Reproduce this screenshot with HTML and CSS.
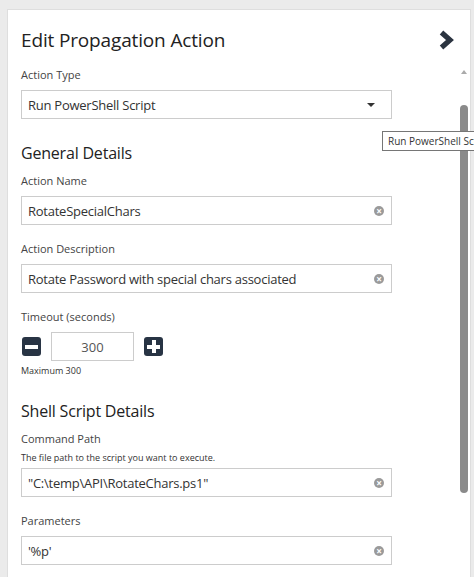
FILE: index.html
```html
<!DOCTYPE html>
<html lang="en">
<head>
    <meta charset="UTF-8">
    <meta name="viewport" content="width=device-width, initial-scale=1.0">
    <title>Edit Propagation Action</title>
    <link rel="stylesheet" href="styles.css">
</head>
<body>

<div class="panel">
    <div class="panel-head">
        <h1>Edit Propagation Action</h1>
        <svg class="chevron" width="16" height="22" viewBox="0 0 16 22">
            <polyline points="3.5,3.5 12,11 3.5,18.5" fill="none" stroke="#2b3440" stroke-width="5.2"/>
        </svg>
    </div>

    <div class="panel-body">
        <form class="form">
            <div class="field">
                <label class="label">Action Type</label>
                <div class="select">
                    <span>Run PowerShell Script</span>
                    <span class="caret"></span>
                </div>
            </div>

            <h2 class="section-title">General Details</h2>

            <div class="field">
                <label class="label">Action Name</label>
                <div class="input">
                    <input type="text" value="RotateSpecialChars">
                    <span class="clear">&times;</span>
                </div>
            </div>

            <div class="field">
                <label class="label">Action Description</label>
                <div class="input">
                    <input type="text" value="Rotate Password with special chars associated">
                    <span class="clear">&times;</span>
                </div>
            </div>

            <div class="field">
                <label class="label">Timeout (seconds)</label>
                <div class="stepper">
                    <button type="button" class="step minus"><span></span></button>
                    <input type="text" class="step-value" value="300">
                    <button type="button" class="step plus"><span></span></button>
                </div>
                <div class="hint">Maximum 300</div>
            </div>

            <h2 class="section-title">Shell Script Details</h2>

            <div class="field">
                <label class="label">Command Path</label>
                <div class="help">The file path to the script you want to execute.</div>
                <div class="input">
                    <input type="text" value="&quot;C:\temp\API\RotateChars.ps1&quot;">
                    <span class="clear">&times;</span>
                </div>
            </div>

            <div class="field">
                <label class="label">Parameters</label>
                <div class="input">
                    <input type="text" value="'%p'">
                    <span class="clear">&times;</span>
                </div>
            </div>
        </form>

        <div class="scrollbar">
            <span class="scroll-up"></span>
            <span class="thumb"></span>
        </div>
    </div>
</div>

<div class="tooltip">Run PowerShell Script</div>

</body>
</html>
```

FILE: styles.css
```css
body {
    font-family: 'Open Sans', 'Liberation Sans', sans-serif;
    background-color: #ebebeb;
    margin: 0;
    padding: 9px 3px 0 7px;
    height: 100vh;
    box-sizing: border-box;
    overflow: hidden;
    color: #333;
}

.panel {
    background-color: #fff;
    border: 1px solid #dedede;
    border-bottom: none;
    height: 100%;
    overflow: hidden;
}

.panel-head {
    display: flex;
    justify-content: space-between;
    align-items: center;
    padding: 16px 16px 0 13px;
}

.panel-head h1 {
    margin: 0;
    font-size: 19px;
    line-height: 28px;
    font-weight: 400;
    color: #222;
    letter-spacing: -0.15px;
}

.panel-body {
    display: flex;
}

.form {
    flex: 1;
    padding: 13px 0 0 13px;
}

.field {
    margin-bottom: 16px;
}

.label {
    display: block;
    font-size: 11px;
    line-height: 15px;
    color: #444;
    margin-bottom: 8px;
}

.section-title {
    margin: 23px 0 9px;
    font-size: 16px;
    line-height: 22px;
    font-weight: 400;
    color: #222;
    letter-spacing: -0.2px;
}

.select,
.input {
    width: 371px;
    height: 29px;
    box-sizing: border-box;
    border: 1px solid #ccc;
    display: flex;
    align-items: center;
    font-size: 13px;
    letter-spacing: -0.25px;
}

.select {
    justify-content: space-between;
    padding: 0 16px 0 6px;
    color: #333;
}

.caret {
    width: 0;
    height: 0;
    border-left: 4px solid transparent;
    border-right: 4px solid transparent;
    border-top: 4px solid #333;
}

.input {
    padding: 0 7px 0 6px;
}

.input input {
    flex: 1;
    border: none;
    outline: none;
    padding: 0;
    font-family: inherit;
    font-size: 13px;
    letter-spacing: -0.25px;
    color: #333;
    background: none;
}

.clear {
    width: 10px;
    height: 10px;
    border-radius: 50%;
    background-color: #9a9a9a;
    color: #fff;
    font-size: 10px;
    line-height: 10px;
    text-align: center;
    font-weight: 700;
    letter-spacing: 0;
}

.stepper {
    display: flex;
    align-items: center;
    gap: 10px;
    padding-left: 1px;
}

.step {
    width: 19px;
    height: 19px;
    border: none;
    border-radius: 3px;
    background-color: #283444;
    padding: 0;
    position: relative;
}

.step span,
.plus::after {
    position: absolute;
    left: 3px;
    top: 8px;
    width: 13px;
    height: 4px;
    background-color: #fff;
}

.plus::after {
    content: '';
    left: 8px;
    top: 3px;
    width: 4px;
    height: 13px;
}

.step-value {
    width: 83px;
    height: 29px;
    box-sizing: border-box;
    border: 1px solid #ccc;
    text-align: center;
    font-family: inherit;
    font-size: 13px;
    color: #555;
    padding: 0;
}

.hint,
.help {
    font-size: 9px;
    line-height: 12px;
    color: #333;
}

.hint {
    margin-top: 4px;
}

.help {
    margin: -2px 0 4px;
}

.scrollbar {
    width: 12px;
    display: flex;
    flex-direction: column;
    align-items: center;
    padding-top: 16px;
}

.scroll-up {
    width: 0;
    height: 0;
    border-left: 3px solid transparent;
    border-right: 3px solid transparent;
    border-bottom: 4px solid #aaa;
}

.thumb {
    margin-top: 31px;
    width: 8px;
    height: 388px;
    border-radius: 4px;
    background-color: #8a8a8a;
}

.tooltip {
    position: absolute;
    top: 131px;
    left: 382px;
    padding: 2px 5px;
    border: 1px solid #767676;
    background-color: #fff;
    font-size: 10px;
    line-height: 14px;
    color: #333;
    white-space: nowrap;
}
```
